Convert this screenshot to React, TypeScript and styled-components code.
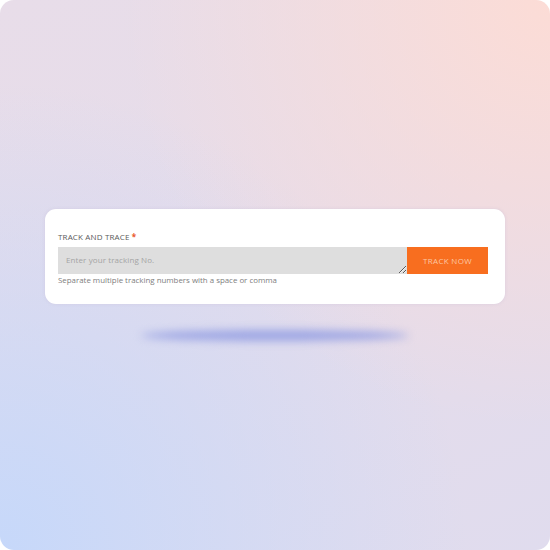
import React from 'react'
import styled, { createGlobalStyle } from 'styled-components'

const GlobalStyle = createGlobalStyle`
    html, body {
        margin: 0;
        padding: 0;
        background: #ffffff;
    }
    * {
        box-sizing: border-box;
    }
`

function App() {
    return (
        <>
            <GlobalStyle />
            <StFrame>
                <StCard>
                    <StLabel>
                        TRACK AND TRACE <StRequired>*</StRequired>
                    </StLabel>
                    <StRow>
                        <StInput placeholder="Enter your tracking No." />
                        <StButton type="button">TRACK NOW</StButton>
                    </StRow>
                    <StHint>Separate multiple tracking numbers with a space or comma</StHint>
                </StCard>
                <StShadow />
            </StFrame>
        </>
    )
}

export default App

const StFrame = styled.div`
    width: 550px;
    height: 550px;
    border-radius: 14px;
    overflow: hidden;
    display: flex;
    flex-direction: column;
    align-items: center;
    justify-content: center;
    font-family: 'Open Sans', 'Liberation Sans', sans-serif;
    background:
        radial-gradient(circle at 100% 0%, rgba(252, 220, 214, 1) 0%, rgba(252, 220, 214, 0) 55%),
        radial-gradient(circle at 0% 100%, rgba(198, 216, 250, 1) 0%, rgba(198, 216, 250, 0) 60%),
        linear-gradient(160deg, #e8dde9 0%, #e6dcea 50%, #e0dcee 100%);
`

const StCard = styled.div`
    width: 460px;
    height: 95px;
    background: #ffffff;
    border-radius: 11px;
    padding: 22px 17px 0 13px;
    display: flex;
    flex-direction: column;
    box-shadow: 0 0 3px rgba(200, 190, 215, 0.5);
`

const StLabel = styled.div`
    font-size: 8px;
    line-height: 11px;
    color: #5a5a5a;
    letter-spacing: 0.15px;
    margin-bottom: 5px;
`

const StRequired = styled.span`
    color: #e9582b;
    font-weight: 700;
`

const StRow = styled.div`
    display: flex;
    height: 27px;
`

const StInput = styled.textarea`
    flex: 1;
    height: 27px;
    border: none;
    outline: none;
    background: #dedede;
    padding: 7px 8px;
    font-family: inherit;
    font-size: 8px;
    line-height: 12px;
    letter-spacing: 0.1px;
    color: #555;
    &::placeholder {
        color: #a4a4a4;
    }
`

const StButton = styled.button`
    width: 81px;
    height: 27px;
    border: none;
    background: #f86e1f;
    color: #fcc7a4;
    font-family: inherit;
    font-size: 8px;
    letter-spacing: 0.3px;
    padding: 0;
`

const StHint = styled.div`
    margin-top: 1px;
    font-size: 7.9px;
    line-height: 11px;
    color: #7e7e7e;
`

const StShadow = styled.div`
    width: 268px;
    height: 11px;
    margin-top: 26px;
    border-radius: 50%;
    background: rgba(150, 160, 226, 0.9);
    filter: blur(4px);
`
